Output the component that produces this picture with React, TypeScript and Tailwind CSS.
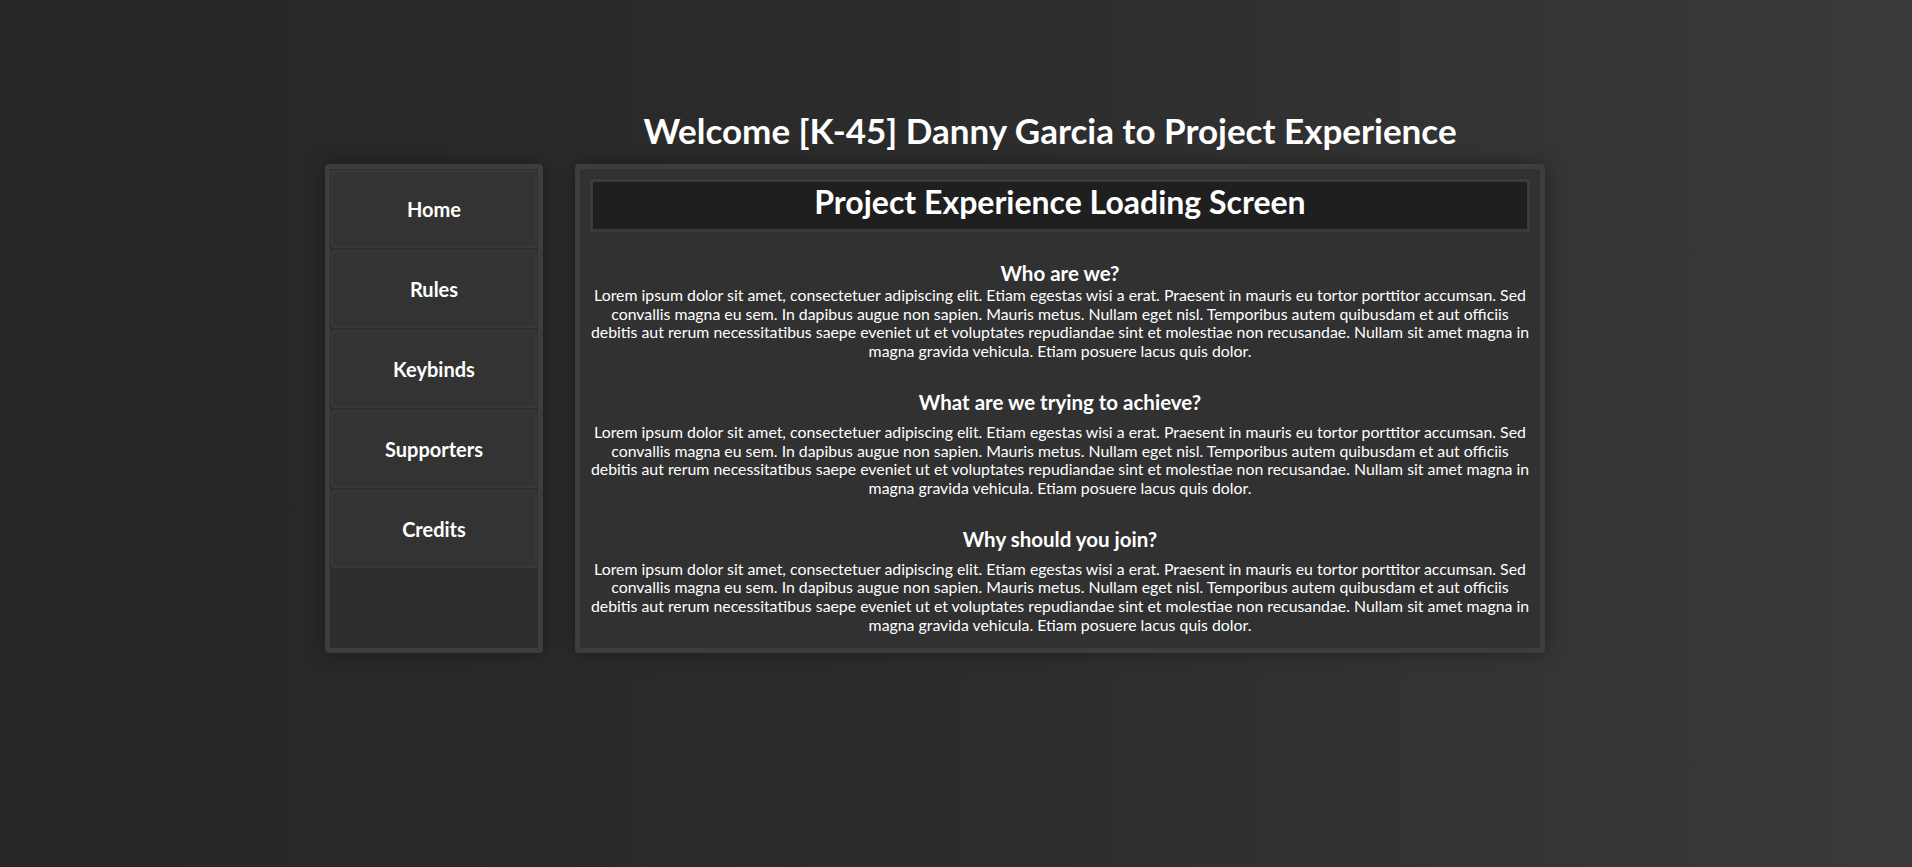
const lorem =
  "Lorem ipsum dolor sit amet, consectetuer adipiscing elit. Etiam egestas wisi a erat. Praesent in mauris eu tortor porttitor accumsan. Sed convallis magna eu sem. In dapibus augue non sapien. Mauris metus. Nullam eget nisl. Temporibus autem quibusdam et aut officiis debitis aut rerum necessitatibus saepe eveniet ut et voluptates repudiandae sint et molestiae non recusandae. Nullam sit amet magna in magna gravida vehicula. Etiam posuere lacus quis dolor.";

const navItems = ["Home", "Rules", "Keybinds", "Supporters", "Credits"];

const sections = [
  { title: "Who are we?", gap: "mt-px" },
  { title: "What are we trying to achieve?", gap: "mt-[9px]" },
  { title: "Why should you join?", gap: "mt-[9px]" },
];

function Sidebar() {
  return (
    <nav className="w-[218px] h-[489px] rounded-[4px] border-[5px] border-[#3d3d3d] bg-[#2e2e2e] p-px shadow-[0_0_18px_rgba(0,0,0,0.35)]">
      <ul className="flex flex-col gap-[2px]">
        {navItems.map((item) => (
          <li key={item}>
            <button className="w-full h-[78px] rounded-[3px] border-2 border-[#393939] bg-[#333333] text-[20px] font-bold text-white">
              {item}
            </button>
          </li>
        ))}
      </ul>
    </nav>
  );
}

export default function App() {
  return (
    <div className="min-h-[867px] bg-linear-to-r from-[#262626] via-[#2c2c2c] to-[#3a3a3a] font-['Lato',_'Liberation_Sans',_sans-serif] text-white">
      <div className="w-[1262px] mx-auto flex gap-[32px] pt-[164px]">
        <Sidebar />
        <div className="relative w-[970px]">
          {/* page heading sits above the content panel */}
          <h1 className="absolute bottom-full mb-[13px] w-full pr-[20px] text-center text-[35px] font-bold leading-[1.2]">
            Welcome [K-45] Danny Garcia to Project Experience
          </h1>
          <main className="h-[489px] rounded-[4px] border-[5px] border-[#3d3d3d] bg-[#313131] px-[10px] pt-[10px] shadow-[0_0_18px_rgba(0,0,0,0.35)]">
            <div className="h-[53px] border-[3px] border-[#3b3b3b] bg-[#1f1f1f] text-center">
              <h2 className="text-[32px] font-bold leading-[40px]">Project Experience Loading Screen</h2>
            </div>
            <div className="mt-[29px] text-center">
              {sections.map((s, i) => (
                <section key={s.title} className={i > 0 ? "mt-[29px]" : ""}>
                  <h3 className="text-[20.5px] font-bold leading-[24px]">{s.title}</h3>
                  <p className={`${s.gap} text-[15.85px] leading-[18.7px]`}>{lorem}</p>
                </section>
              ))}
            </div>
          </main>
        </div>
      </div>
    </div>
  );
}
